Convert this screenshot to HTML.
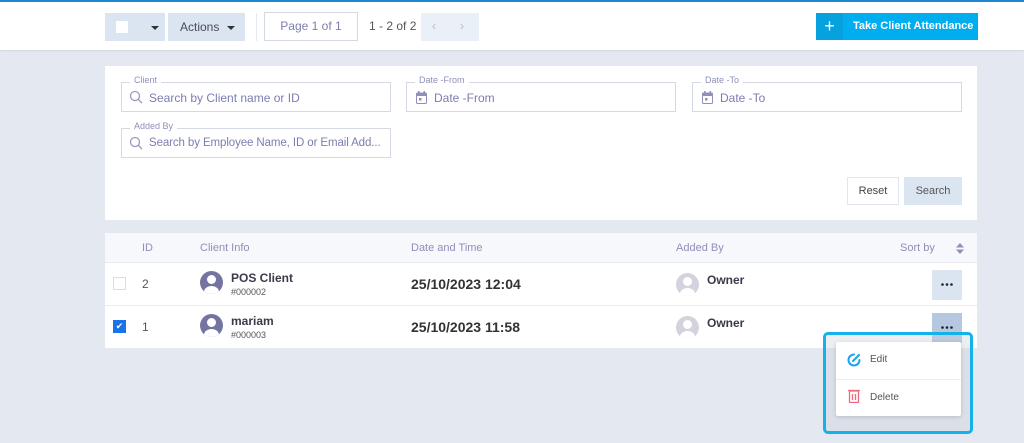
<!DOCTYPE html>
<html><head><style>
*{box-sizing:border-box;margin:0;padding:0}
body{width:1024px;height:443px;background:#e4e9f1;font-family:"Liberation Sans",sans-serif;position:relative;overflow:hidden;color:#3a3a4a}
.a{position:absolute;white-space:nowrap}
.top{left:0;top:0;width:1024px;height:50px;background:#fff;border-top:2px solid #1f86d0;box-shadow:0 1px 2px rgba(0,0,0,.08)}
.btn{position:absolute;background:#dbe5f1;font-size:12px;color:#4a4a5a}
.fld{position:absolute;border:1px solid #d5d9e3;height:30px;background:#fff}
.fld .lb{position:absolute;top:-8px;left:8px;background:#fff;padding:0 4px;font-size:9px;color:#8f8fba}
.fld .ph{position:absolute;left:27px;top:8px;font-size:12px;color:#7d7db0;white-space:nowrap;overflow:hidden;max-width:236px}
.hd{font-size:11px;color:#8f8fba;position:absolute;top:9px}
.av{position:absolute;border-radius:50%;overflow:hidden}
.dots{position:absolute;width:30px;height:30px}
</style></head><body>
<div class="a top">
 <div class="btn" style="left:105px;top:11px;width:60px;height:28px"><div class="a" style="left:11px;top:8px;width:12px;height:12px;background:#fff"></div><div class="a" style="left:46px;top:13px;border:4px solid transparent;border-top:4px solid #333;border-bottom:0"></div></div>
 <div class="btn" style="left:168px;top:11px;width:77px;height:28px"><span class="a" style="left:12px;top:7px">Actions</span><div class="a" style="left:59px;top:13px;border:4px solid transparent;border-top:4px solid #333;border-bottom:0"></div></div>
 <div class="a" style="left:256px;top:11px;width:1px;height:28px;background:#e4e9f1"></div>
 <div class="a" style="left:264px;top:10px;width:94px;height:29px;border:1px solid #d5d9e3;font-size:12px;color:#7d7db0;text-align:center;line-height:27px">Page 1 of 1</div>
 <div class="a" style="left:369px;top:17px;font-size:12px;color:#555">1 - 2 of 2</div>
 <div class="btn" style="left:421px;top:11px;width:58px;height:28px;background:#eaf0f7;color:#bbb"><span class="a" style="left:11px;top:6px">‹</span><span class="a" style="left:39px;top:6px">›</span></div>
 <div class="a" style="left:816px;top:11px;width:162px;height:27px;background:#00aeef"><div class="a" style="left:0;top:0;width:27px;height:27px;background:#05a2de;color:#fff;font-size:18px;text-align:center;line-height:26px">+</div><span class="a" style="left:37px;top:7px;color:#fff;font-size:11px;font-weight:bold">Take Client Attendance</span></div>
</div>

<div class="a" style="left:105px;top:66px;width:872px;height:154px;background:#fff">
 <div class="fld" style="left:16px;top:16px;width:270px"><span class="lb">Client</span><svg class="a" style="left:7px;top:7px" width="14" height="14" viewBox="0 0 14 14" fill="none" stroke="#9a9ac0" stroke-width="1.3"><circle cx="6" cy="6" r="4.5"/><path d="M9.3 9.3L13 13"/></svg><span class="ph">Search by Client name or ID</span></div>
 <div class="fld" style="left:301px;top:16px;width:270px"><span class="lb">Date -From</span><svg class="a" style="left:9px;top:8px" width="11" height="13" viewBox="0 0 11 13"><rect x="0.5" y="2" width="10" height="10.5" rx="1" fill="none" stroke="#8f8fba"/><rect x="0.5" y="2" width="10" height="3" fill="#8f8fba"/><rect x="2" y="0" width="1.5" height="3" fill="#8f8fba"/><rect x="7.5" y="0" width="1.5" height="3" fill="#8f8fba"/><rect x="3" y="7" width="2.5" height="2.5" fill="#8f8fba"/></svg><span class="ph">Date -From</span></div>
 <div class="fld" style="left:587px;top:16px;width:270px"><span class="lb">Date -To</span><svg class="a" style="left:9px;top:8px" width="11" height="13" viewBox="0 0 11 13"><rect x="0.5" y="2" width="10" height="10.5" rx="1" fill="none" stroke="#8f8fba"/><rect x="0.5" y="2" width="10" height="3" fill="#8f8fba"/><rect x="2" y="0" width="1.5" height="3" fill="#8f8fba"/><rect x="7.5" y="0" width="1.5" height="3" fill="#8f8fba"/><rect x="3" y="7" width="2.5" height="2.5" fill="#8f8fba"/></svg><span class="ph">Date -To</span></div>
 <div class="fld" style="left:16px;top:62px;width:270px"><span class="lb">Added By</span><svg class="a" style="left:7px;top:7px" width="14" height="14" viewBox="0 0 14 14" fill="none" stroke="#9a9ac0" stroke-width="1.3"><circle cx="6" cy="6" r="4.5"/><path d="M9.3 9.3L13 13"/></svg><span class="ph" style="font-size:11.5px;letter-spacing:-0.1px">Search by Employee Name, ID or Email Add...</span></div>
 <div class="a" style="left:742px;top:111px;width:52px;height:28px;border:1px solid #e0e5ee;font-size:11px;text-align:center;line-height:26px;color:#444">Reset</div>
 <div class="a" style="left:799px;top:111px;width:58px;height:28px;background:#dbe5f1;font-size:11px;text-align:center;line-height:28px;color:#555">Search</div>
</div>

<div class="a" style="left:105px;top:233px;width:872px;height:115px;background:#fff">
 <div class="a" style="left:0;top:0;width:872px;height:30px;background:#f6f8fb;border-bottom:1px solid #e8ebf1">
  <span class="hd" style="left:37px">ID</span><span class="hd" style="left:95px">Client Info</span><span class="hd" style="left:306px">Date and Time</span><span class="hd" style="left:571px">Added By</span><span class="hd" style="left:795px">Sort by</span>
  <svg class="a" style="left:851px;top:10px" width="8" height="11" viewBox="0 0 8 11" fill="#8f8fba"><path d="M0 4.5L4 0 8 4.5Z M0 6.5L4 11 8 6.5Z"/></svg>
 </div>
 <div class="a" style="left:0;top:72px;width:872px;height:1px;background:#e8ebf1"></div>
 <div class="a" style="left:8px;top:44px;width:13px;height:13px;border:1px solid #ddd"></div>
 <span class="a" style="left:37px;top:44px;font-size:12px;color:#555">2</span>
 <div class="av" style="left:95px;top:38px;width:23px;height:23px;background:#7474a0"><div class="a" style="left:7px;top:4px;width:9px;height:9px;border-radius:50%;background:#fff"></div><div class="a" style="left:4px;top:15px;width:15px;height:12px;border-radius:50%;background:#fff"></div></div>
 <span class="a" style="left:126px;top:38px;font-size:12px;font-weight:bold;color:#3a3a4a">POS Client</span>
 <span class="a" style="left:126px;top:54px;font-size:9px;color:#555">#000002</span>
 <span class="a" style="left:306px;top:43px;font-size:14px;font-weight:bold;color:#333">25/10/2023 12:04</span>
 <div class="av" style="left:571px;top:40px;width:23px;height:23px;background:#d3d3dd"><div class="a" style="left:7px;top:4px;width:9px;height:9px;border-radius:50%;background:#fff"></div><div class="a" style="left:4px;top:15px;width:15px;height:12px;border-radius:50%;background:#fff"></div></div>
 <span class="a" style="left:602px;top:40px;font-size:12px;font-weight:bold;color:#3a3a4a">Owner</span>
 <div class="dots" style="left:827px;top:37px;background:#dbe5f1"><svg class="a" style="left:9px;top:13px" width="12" height="3" viewBox="0 0 12 3" fill="#222"><circle cx="1.5" cy="1.5" r="1.3"/><circle cx="6" cy="1.5" r="1.3"/><circle cx="10.5" cy="1.5" r="1.3"/></svg></div>
 <div class="a" style="left:8px;top:87px;width:13px;height:13px;background:#1a73e8;color:#fff;font-size:9px;text-align:center;line-height:13px">✔</div>
 <span class="a" style="left:37px;top:87px;font-size:12px;color:#555">1</span>
 <div class="av" style="left:95px;top:81px;width:23px;height:23px;background:#7474a0"><div class="a" style="left:7px;top:4px;width:9px;height:9px;border-radius:50%;background:#fff"></div><div class="a" style="left:4px;top:15px;width:15px;height:12px;border-radius:50%;background:#fff"></div></div>
 <span class="a" style="left:126px;top:81px;font-size:12px;font-weight:bold;color:#3a3a4a">mariam</span>
 <span class="a" style="left:126px;top:97px;font-size:9px;color:#555">#000003</span>
 <span class="a" style="left:306px;top:86px;font-size:14px;font-weight:bold;color:#333">25/10/2023 11:58</span>
 <div class="av" style="left:571px;top:83px;width:23px;height:23px;background:#d3d3dd"><div class="a" style="left:7px;top:4px;width:9px;height:9px;border-radius:50%;background:#fff"></div><div class="a" style="left:4px;top:15px;width:15px;height:12px;border-radius:50%;background:#fff"></div></div>
 <span class="a" style="left:602px;top:83px;font-size:12px;font-weight:bold;color:#3a3a4a">Owner</span>
 <div class="dots" style="left:827px;top:80px;background:#b5c8e0"><svg class="a" style="left:9px;top:13px" width="12" height="3" viewBox="0 0 12 3" fill="#222"><circle cx="1.5" cy="1.5" r="1.3"/><circle cx="6" cy="1.5" r="1.3"/><circle cx="10.5" cy="1.5" r="1.3"/></svg></div>
</div>

<div class="a" style="left:823px;top:332px;width:150px;height:102px;border:3px solid #14b1ea;border-radius:5px;background:rgba(200,205,215,.35)"></div>
<div class="a" style="left:836px;top:342px;width:125px;height:74px;background:#fff;box-shadow:0 1px 4px rgba(0,0,0,.15);border-radius:2px">
 <svg class="a" style="left:10px;top:10px" width="16" height="16" viewBox="0 0 16 16" fill="none" stroke="#1aa3e8" stroke-width="2" stroke-linecap="round"><path d="M13.5 8A5.5 5.5 0 1 1 8 2.5"/><path d="M7 9L13 3"/></svg>
 <span class="a" style="left:34px;top:12px;font-size:10px;color:#555">Edit</span>
 <div class="a" style="left:0;top:37px;width:125px;height:1px;background:#eee"></div>
 <svg class="a" style="left:12px;top:47px" width="12" height="14" viewBox="0 0 12 14" fill="none" stroke="#f06a7d" stroke-width="1.3"><path d="M0 1.5H12"/><rect x="1.5" y="2" width="9" height="11.5"/><path d="M4.5 5V11M7.5 5V11"/></svg>
 <span class="a" style="left:34px;top:50px;font-size:10px;color:#555">Delete</span>
</div>
</body></html>
